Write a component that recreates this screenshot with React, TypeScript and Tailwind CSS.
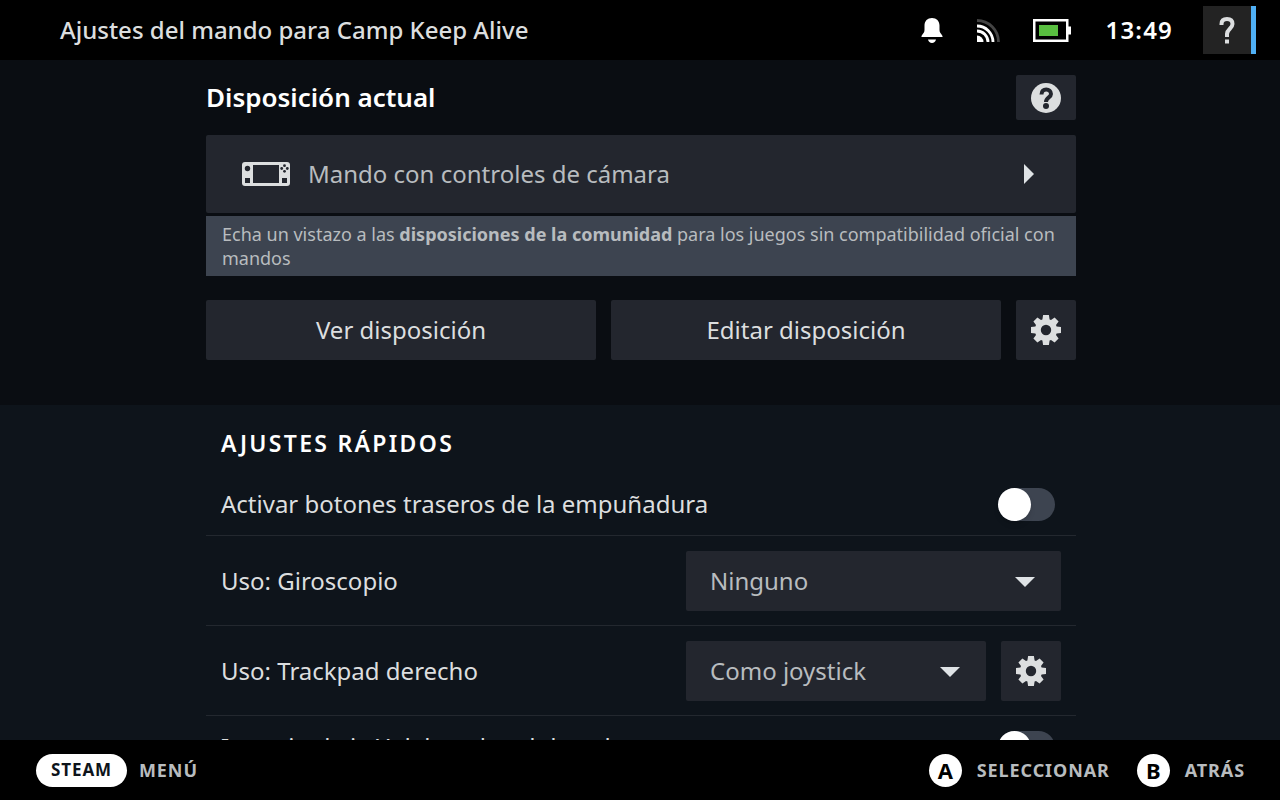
import React, { useState } from "react";

function Gear() {
  return (
    <svg viewBox="-15 -15 30 30" className="size-[30px]" fill="currentColor" aria-hidden="true">
      <path
        fillRule="evenodd"
        d="M-2.9-15H2.9L3.6-10.6 5-10 8.6-12.6 12.6-8.6 10-5 10.6-3.6 15-2.9V2.9L10.6 3.6 10 5 12.6 8.6 8.6 12.6 5 10 3.6 10.6 2.9 15H-2.9L-3.6 10.6-5 10-8.6 12.6-12.6 8.6-10 5-10.6 3.6-15 2.9V-2.9L-10.6-3.6-10-5-12.6-8.6-8.6-12.6-5-10-3.6-10.6ZM0-5.2A5.2 5.2 0 1 0 0 5.2 5.2 5.2 0 1 0 0-5.2Z"
      />
    </svg>
  );
}

function Toggle({ id }: { id: string }) {
  const [on, setOn] = useState(false);
  return (
    <span className="relative mr-1.5 flex h-[33px] w-[57px] shrink-0">
      <input
        id={id}
        type="checkbox"
        checked={on}
        onChange={(e) => setOn(e.target.checked)}
        className="peer h-full w-full appearance-none rounded-full bg-[#3d4450] checked:bg-[#1a9fff]"
      />
      <span className="pointer-events-none absolute top-0 left-0 size-[33px] rounded-full bg-white shadow-md peer-checked:left-6" />
    </span>
  );
}

function Dropdown({ id, options, wide }: { id: string; options: string[]; wide?: boolean }) {
  return (
    <span className={wide ? "relative w-[375px]" : "relative w-[300px]"}>
      <select
        id={id}
        className="h-[60px] w-full appearance-none rounded-xs bg-[#23262e] px-6 text-[#b8bcbf]"
      >
        {options.map((o) => (
          <option key={o}>{o}</option>
        ))}
      </select>
      <svg viewBox="0 0 20 10" className="pointer-events-none absolute top-[26px] right-[26px] h-2.5 w-5" aria-hidden="true">
        <path d="M0 0H20L10 10Z" fill="#dfe3e6" />
      </svg>
    </span>
  );
}

function Row({ id, label, compact, children }: { id: string; label: string; compact?: boolean; children: React.ReactNode }) {
  return (
    <div
      className={`flex items-center justify-between border-b border-[#23282f] px-[15px] ${compact ? "h-[63px]" : "h-[90px]"}`}
    >
      <label htmlFor={id}>{label}</label>
      <div className="flex gap-[15px]">{children}</div>
    </div>
  );
}

export default function App() {
  return (
    <div className="flex h-screen flex-col overflow-hidden bg-[#0e141b] font-['Noto_Sans',sans-serif] text-2xl text-[#dcdedf]">
      <header className="flex h-[60px] shrink-0 items-center bg-black pr-6 pl-[60px]">
        <h1 className="grow font-medium">Ajustes del mando para Camp Keep Alive</h1>
        <div className="flex items-center text-white">
          <svg viewBox="0 0 22 25" className="mr-[34px] h-[25px] w-[22px]" fill="currentColor" aria-label="Notificaciones">
            <path d="M11 0C6.500 0 3.500 3 3.500 7.500V12C3.500 14.500 2 15.500 .5 18V19H21.500V18C20 15.500 18.500 14.500 18.500 12V7.500C18.500 3 15.500 0 11 0ZM7 21.500H15C14.500 23.500 13 25 11 25S7.500 23.500 7 21.500Z" />
          </svg>
          <svg viewBox="0 0 23 23" className="mr-[33px] size-[23px]" fill="none" stroke="currentColor" strokeWidth="2.800" aria-label="Red">
            <path d="M0 1.500A21.500 21.500 0 0 1 21.500 23" stroke="#444" />
            <path d="M0 7A16 16 0 0 1 16 23M0 12A11 11 0 0 1 11 23" />
            <path d="M0 16.500A6.500 6.500 0 0 1 6.500 23H0Z" fill="currentColor" stroke="none" />
          </svg>
          <svg viewBox="0 0 38 23" className="mr-[34px] h-[23px] w-[38px]" aria-label="Batería">
            <rect x="1.250" y="1.250" width="33" height="20.500" fill="none" stroke="#fff" strokeWidth="2.500" />
            <rect x="35" y="7.500" width="3" height="8" fill="#fff" />
            <rect x="6" y="6" width="19" height="11" fill="#59bf40" />
          </svg>
          <time className="mr-[30px] font-semibold tracking-wider">13:49</time>
          <button aria-label="Ayuda" className="flex h-12 w-[53px] items-center justify-center border-r-[5px] border-[#4fb0f5] bg-[#232323] text-[#dcdedf]">
            <svg viewBox="0 0 16 28" className="h-7 w-4" fill="none" stroke="currentColor" strokeWidth="4" aria-hidden="true">
              <path d="M2.500 9V8C2.500 4.500 4.500 3 8 3S13.500 4.500 13.500 8C13.500 12.500 8 13 8 18V21" />
              <path d="M8 23.500V27.500" />
            </svg>
          </button>
        </div>
      </header>

      <main className="min-h-0 flex-1 overflow-hidden">
        <section className="bg-[#0a0d12] pt-[15px] pb-[45px] pl-0.5">
          <div className="mx-auto w-full max-w-[870px]">
            <div className="flex h-[45px] items-center justify-between">
              <h2 className="text-[26px] font-semibold text-white">Disposición actual</h2>
              <button aria-label="Información" className="flex h-[45px] w-[60px] items-center justify-center rounded-xs bg-[#23262e]">
                <svg viewBox="0 0 30 30" className="size-[30px]" aria-hidden="true">
                  <circle cx="15" cy="15" r="15" fill="#dcdedf" />
                  <path d="M10.500 11.500C10.500 8.200 12.500 6.500 15.200 6.500S20 8.200 20 11C20 14.500 15 14.300 15 19" fill="none" stroke="#23262e" strokeWidth="4" />
                  <circle cx="15" cy="23" r="3" fill="#23262e" />
                </svg>
              </button>
            </div>
            <button className="mt-[15px] flex h-[78px] w-full items-center rounded-xs bg-[#23262e] pr-[42px] pl-9 text-[#b8bcbf]">
              <svg viewBox="0 0 48 24" className="mr-[18px] h-6 w-12" aria-hidden="true">
                <rect width="48" height="24" rx="3" fill="#dcdedf" />
                <g fill="#23262e">
                  <rect x="11" y="3" width="26" height="18" />
                  <circle cx="5.500" cy="6.500" r="2.700" />
                  <rect x="3" y="16" width="5" height="5" />
                  <rect x="40" y="16" width="5" height="5" />
                  <circle cx="42.500" cy="3.700" r="1.400" />
                  <circle cx="42.500" cy="9.300" r="1.400" />
                  <circle cx="39.700" cy="6.500" r="1.400" />
                  <circle cx="45.300" cy="6.500" r="1.400" />
                </g>
              </svg>
              <span className="grow text-left">Mando con controles de cámara</span>
              <svg viewBox="0 0 10 20" className="h-5 w-2.5" aria-hidden="true">
                <path d="M0 0L10 10L0 20Z" fill="#dfe3e6" />
              </svg>
            </button>
            <p className="mt-[3px] bg-[#3d4450] px-4 py-1.5 text-lg leading-6 text-[#b8bcbf]">
              Echa un vistazo a las <b>disposiciones de la comunidad</b> para los juegos sin compatibilidad oficial con mandos
            </p>
            <div className="mt-6 flex gap-[15px]">
              <button className="h-[60px] flex-1 rounded-xs bg-[#23262e]">Ver disposición</button>
              <button className="h-[60px] flex-1 rounded-xs bg-[#23262e]">Editar disposición</button>
              <button aria-label="Opciones de la disposición" className="flex size-[60px] items-center justify-center rounded-xs bg-[#23262e]">
                <Gear />
              </button>
            </div>
          </div>
        </section>

        <section className="pt-[22px] pl-0.5">
          <div className="mx-auto w-full max-w-[870px]">
            <h2 className="mb-3.5 px-[15px] text-[23px] leading-8 font-semibold tracking-widest text-white">AJUSTES RÁPIDOS</h2>
            <Row id="grip" label="Activar botones traseros de la empuñadura" compact>
              <Toggle id="grip" />
            </Row>
            <Row id="gyro" label="Uso: Giroscopio">
              <Dropdown id="gyro" options={["Ninguno", "Como joystick", "Como ratón"]} wide />
            </Row>
            <Row id="pad" label="Uso: Trackpad derecho">
              <Dropdown id="pad" options={["Como joystick", "Como ratón", "Ninguno"]} />
              <button aria-label="Opciones del trackpad derecho" className="flex size-[60px] items-center justify-center rounded-xs bg-[#23262e]">
                <Gear />
              </button>
            </Row>
            <Row id="invert" label="Invertir el eje Y del trackpad derecho" compact>
              <Toggle id="invert" />
            </Row>
          </div>
        </section>
      </main>

      <footer className="flex h-[60px] shrink-0 items-center justify-between bg-black pr-[35px] pl-9 text-lg font-bold tracking-wider text-[#b8bcbf]">
        <button className="flex items-center gap-3">
          <span className="flex h-[33px] items-center rounded-full bg-white px-[15px] text-[17px] text-[#0e141b]">STEAM</span>
          MENÚ
        </button>
        <div className="flex gap-[27px]">
          <button className="flex items-center gap-[15px]">
            <span className="flex size-[33px] items-center justify-center rounded-full bg-white text-[22px] tracking-normal text-black">A</span>
            SELECCIONAR
          </button>
          <button className="flex items-center gap-[15px]">
            <span className="flex size-[33px] items-center justify-center rounded-full bg-white text-[22px] tracking-normal text-black">B</span>
            ATRÁS
          </button>
        </div>
      </footer>
    </div>
  );
}
